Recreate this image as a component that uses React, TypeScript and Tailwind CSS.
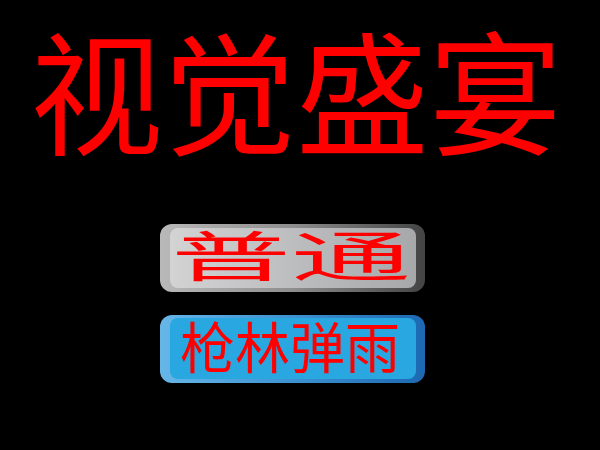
export default function App() {
  const cjk = { fontFamily: '"Noto Sans CJK SC", "Noto Sans", sans-serif' };
  return (
    <div className="w-[600px] h-[450px] bg-black overflow-hidden flex flex-col" style={cjk}>
      <div className="ml-[30px] w-fit text-[133px] leading-[175px] text-[#ff0000] whitespace-nowrap">
        视觉盛宴
      </div>
      <div className="ml-[160px] mt-[49px] flex flex-col gap-[23px]">
        <div className="w-[265px] h-[68px] rounded-[12px] bg-gradient-to-r from-[#b9b9b9] via-[#8e8e8e] to-[#444444] pl-[10px] pr-[9px] pt-[4px] pb-[4px]">
          <div className="h-full rounded-[8px] bg-gradient-to-r from-[#d3d3d4] to-[#a7a8aa] flex items-center justify-center">
            <span className="inline-block text-[54px] leading-none text-[#ff0000] scale-x-[2.22] -translate-x-[2px] -translate-y-[4px]">
              普通
            </span>
          </div>
        </div>
        <div className="w-[265px] h-[68px] rounded-[12px] bg-gradient-to-r from-[#66b6e8] via-[#3e92d2] to-[#1d68b2] pl-[10px] pr-[9px] pt-[3px] pb-[4px]">
          <div className="h-full rounded-[8px] bg-[#29a7e1] flex items-center justify-center">
            <span className="inline-block text-[55px] leading-none text-[#ff0000] -translate-x-[3px] -translate-y-[4px]">
              枪林弹雨
            </span>
          </div>
        </div>
      </div>
    </div>
  );
}
